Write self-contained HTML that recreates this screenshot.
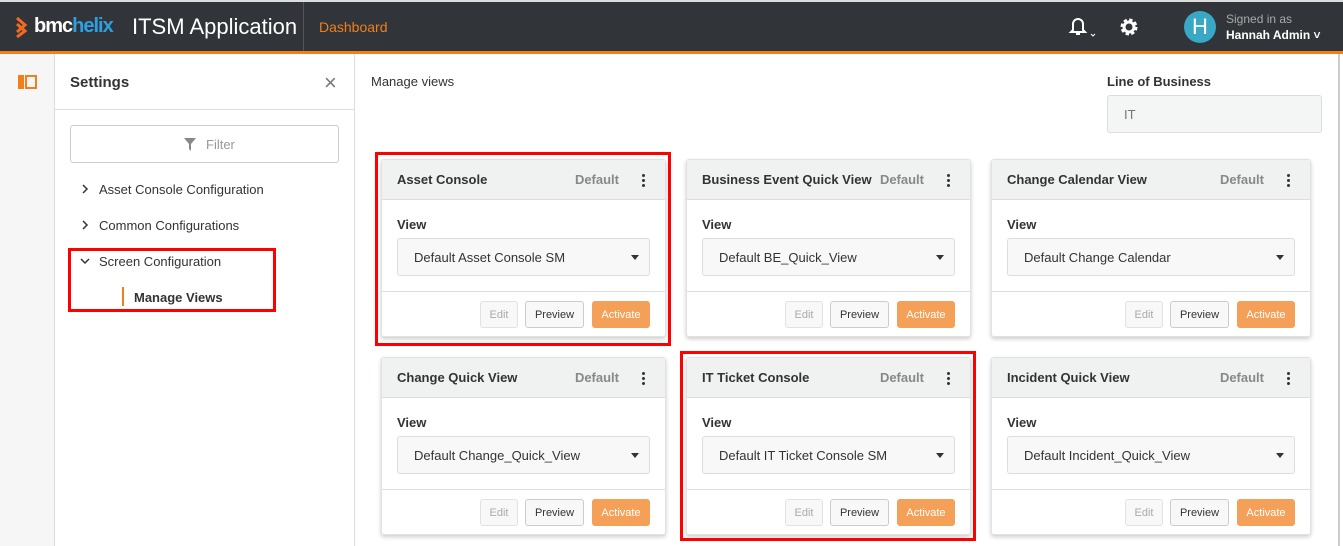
<!DOCTYPE html>
<html><head><meta charset="utf-8"><style>
*{box-sizing:border-box;margin:0;padding:0}
body{width:1343px;height:546px;overflow:hidden;background:#fff;font-family:"Liberation Sans",sans-serif;color:#333;position:relative}
.a{position:absolute}
.hdr{left:0;top:0;width:1343px;height:54px;background:#313438;border-bottom:3px solid #f07f1c;border-top:2px solid #ddd}
.card{position:absolute;width:285px;height:178px;border:1px solid #e2e2e2;border-radius:3px;box-shadow:0 2px 4px rgba(0,0,0,.2);background:#fff}
.ch{height:40px;background:#f0f1f1;border-bottom:1px solid #ddd;position:relative}
.ct{position:absolute;left:15px;top:12px;font-size:13px;font-weight:bold;color:#333}
.cd{position:absolute;right:46px;top:12px;font-size:13px;font-weight:bold;color:#888}
.dots{position:absolute;right:20px;top:14px;width:3px}
.dots i{display:block;width:3px;height:3px;background:#333;border-radius:50%;margin-bottom:2px}
.vl{position:absolute;left:15px;top:57px;font-size:13px;font-weight:bold;color:#333}
.sel{position:absolute;left:15px;right:15px;top:78px;height:38px;border:1px solid #ddd;border-radius:3px;background:#f8f8f8;font-size:13px;padding:11px 16px;color:#333}
.sel:after{content:"";position:absolute;right:10px;top:16px;border:4px solid transparent;border-top:5px solid #333}
.div{position:absolute;left:0;right:0;top:131px;border-top:1px solid #ddd}
.btn{position:absolute;top:141px;height:27px;border:1px solid #ccc;border-radius:3px;font-size:11px;text-align:center;line-height:27px;background:#f8f8f8}
.e{right:147px;width:38px;color:#aaa;border-color:#e2e2e2}
.p{right:81px;width:59px;color:#333}
.ac{right:15px;width:58px;background:#f5a058;border-color:#f5a058;color:#fff}
.red{position:absolute;border:3px solid #f00}
.chev{position:absolute;left:81px}
</style></head><body>
<div class="a hdr"></div>
<svg class="a" style="left:14px;top:16px" width="14" height="22" viewBox="0 0 14 22"><path d="M3 2 L11 9 L3 16 M3 8 L11 15 L3 21" stroke="#f26a21" stroke-width="3" fill="none"/></svg>
<div class="a" style="left:34px;top:15px;font-size:20px;font-weight:bold;color:#fff;letter-spacing:-1px">bmc<span style="color:#2e9fe0">helix</span></div>
<div class="a" style="left:132px;top:14px;font-size:22px;color:#fff">ITSM Application</div>
<div class="a" style="left:303px;top:2px;width:1px;height:49px;background:#555"></div>
<div class="a" style="left:319px;top:19px;font-size:14px;color:#f07f1c">Dashboard</div>
<svg class="a" style="left:1068px;top:16px" width="32" height="22" viewBox="0 0 32 22"><path d="M3 16 L5 14 V8 A5 5 0 0 1 15 8 V14 L17 16 Z M8 18 H12" stroke="#fff" stroke-width="2" fill="none"/><path d="M23 18 l2 2 l2 -2" stroke="#fff" stroke-width="1" fill="none"/></svg>
<svg class="a" style="left:1118px;top:16px" width="22" height="22" viewBox="0 0 22 22"><circle cx="11" cy="11" r="6.5" fill="none" stroke="#fff" stroke-width="4" stroke-dasharray="3 2.1"/><circle cx="11" cy="11" r="5" fill="none" stroke="#fff" stroke-width="3"/></svg>
<div class="a" style="left:1184px;top:11px;width:32px;height:32px;border-radius:50%;background:#38a8c4;color:#fff;font-size:22px;text-align:center;line-height:32px">H</div>
<div class="a" style="left:1226px;top:12px;font-size:12px;color:#aaa">Signed in as</div>
<div class="a" style="left:1226px;top:28px;font-size:12px;font-weight:bold;color:#fff">Hannah Admin ˅</div>

<div class="a" style="left:0;top:54px;width:55px;height:492px;background:#f6f6f6;border-right:1px solid #ddd"></div>
<div class="a" style="left:18px;top:75px;width:6px;height:14px;background:#f07f1c"></div>
<div class="a" style="left:25px;top:75px;width:12px;height:14px;border:2px solid #f07f1c"></div>
<div class="a" style="left:55px;top:54px;width:300px;height:492px;border-right:1px solid #ddd"></div>
<div class="a" style="left:55px;top:109px;width:300px;border-top:1px solid #ddd"></div>
<div class="a" style="left:70px;top:74px;font-size:15px;font-weight:bold;color:#333">Settings</div>
<div class="a" style="left:324px;top:70px;font-size:22px;color:#777">×</div>
<div class="a" style="left:70px;top:125px;width:269px;height:38px;border:1px solid #ccc;border-radius:3px"></div>
<svg class="a" style="left:184px;top:138px" width="12" height="13" viewBox="0 0 12 13"><path d="M0 0 H12 L7 6 V13 L5 11 V6 Z" fill="#888"/></svg>
<div class="a" style="left:206px;top:137px;font-size:13px;color:#999">Filter</div>
<svg class="chev" style="top:184px" width="8" height="10"><path d="M2 1 L6 5 L2 9" stroke="#333" stroke-width="1.5" fill="none"/></svg>
<div class="a" style="left:99px;top:182px;font-size:13px;color:#333">Asset Console Configuration</div>
<svg class="chev" style="top:220px" width="8" height="10"><path d="M2 1 L6 5 L2 9" stroke="#333" stroke-width="1.5" fill="none"/></svg>
<div class="a" style="left:99px;top:218px;font-size:13px;color:#333">Common Configurations</div>
<div class="a" style="left:99px;top:254px;font-size:13px;color:#333">Screen Configuration</div>
<svg class="a" style="left:80px;top:257px" width="10" height="8"><path d="M1 2 L5 6 L9 2" stroke="#333" stroke-width="1.5" fill="none"/></svg>
<div class="a" style="left:122px;top:287px;width:2px;height:19px;background:#f07f1c"></div>
<div class="a" style="left:134px;top:290px;font-size:13px;font-weight:bold;color:#333">Manage Views</div>
<div class="red" style="left:68px;top:248px;width:208px;height:64px"></div>

<div class="a" style="left:1338px;top:54px;width:2px;height:492px;background:#ccc"></div>
<div class="a" style="left:371px;top:74px;font-size:13px;color:#333">Manage views</div>
<div class="a" style="left:1107px;top:74px;font-size:13px;font-weight:bold;color:#333">Line of Business</div>
<div class="a" style="left:1107px;top:95px;width:215px;height:38px;border:1px solid #ddd;border-radius:3px;background:#f4f5f5;font-size:13px;color:#777;padding:11px 16px">IT</div>

<div class="card" style="left:381px;top:159px"><div class="ch"><span class="ct">Asset Console</span><span class="cd">Default</span><div class="dots"><i></i><i></i><i></i></div></div><span class="vl">View</span><div class="sel">Default Asset Console SM</div><div class="div"></div><div class="btn e">Edit</div><div class="btn p">Preview</div><div class="btn ac">Activate</div></div>
<div class="card" style="left:686px;top:159px"><div class="ch"><span class="ct">Business Event Quick View</span><span class="cd">Default</span><div class="dots"><i></i><i></i><i></i></div></div><span class="vl">View</span><div class="sel">Default BE_Quick_View</div><div class="div"></div><div class="btn e">Edit</div><div class="btn p">Preview</div><div class="btn ac">Activate</div></div>
<div class="card" style="left:991px;top:159px;width:320px"><div class="ch"><span class="ct">Change Calendar View</span><span class="cd">Default</span><div class="dots"><i></i><i></i><i></i></div></div><span class="vl">View</span><div class="sel">Default Change Calendar</div><div class="div"></div><div class="btn e">Edit</div><div class="btn p">Preview</div><div class="btn ac">Activate</div></div>
<div class="card" style="left:381px;top:357px"><div class="ch"><span class="ct">Change Quick View</span><span class="cd">Default</span><div class="dots"><i></i><i></i><i></i></div></div><span class="vl">View</span><div class="sel">Default Change_Quick_View</div><div class="div"></div><div class="btn e">Edit</div><div class="btn p">Preview</div><div class="btn ac">Activate</div></div>
<div class="card" style="left:686px;top:357px"><div class="ch"><span class="ct">IT Ticket Console</span><span class="cd">Default</span><div class="dots"><i></i><i></i><i></i></div></div><span class="vl">View</span><div class="sel">Default IT Ticket Console SM</div><div class="div"></div><div class="btn e">Edit</div><div class="btn p">Preview</div><div class="btn ac">Activate</div></div>
<div class="card" style="left:991px;top:357px;width:320px"><div class="ch"><span class="ct">Incident Quick View</span><span class="cd">Default</span><div class="dots"><i></i><i></i><i></i></div></div><span class="vl">View</span><div class="sel">Default Incident_Quick_View</div><div class="div"></div><div class="btn e">Edit</div><div class="btn p">Preview</div><div class="btn ac">Activate</div></div>

<div class="red" style="left:375px;top:152px;width:296px;height:194px"></div>
<div class="red" style="left:680px;top:351px;width:296px;height:190px"></div>
</body></html>
